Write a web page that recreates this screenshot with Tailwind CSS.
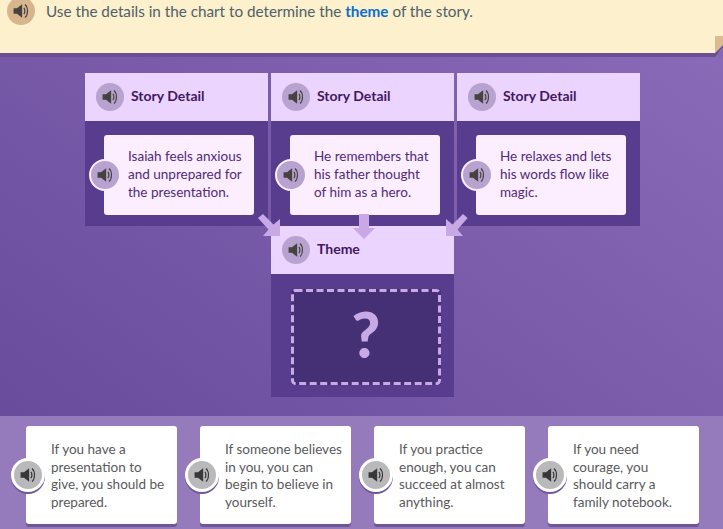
<!DOCTYPE html>
<html>
<head>
    <title>Theme chart</title>
    <meta charset="UTF-8">
    <meta name="viewport" content="width=device-width, initial-scale=1.0">
    <script src="https://cdn.jsdelivr.net/npm/@tailwindcss/browser@4"></script>
</head>
<body class="h-[529px] w-[723px] overflow-hidden font-['Lato','Liberation_Sans',sans-serif]">
<svg class="hidden">
    <symbol id="speaker" viewBox="0 1 14 14">
        <path d="M0.5 5.5H3.5L8 2V14L3.5 10.5H0.5Z" fill="currentColor"/>
        <path d="M9.5 5.2C10.7 6.6 10.7 9.4 9.5 10.8" fill="none" stroke="currentColor" stroke-width="1.1"/>
        <path d="M10.5 2.3C13.4 4.8 13.4 11.2 10.5 13.7" fill="none" stroke="currentColor" stroke-width="1"/>
    </symbol>
</svg>
<div class="relative flex h-full flex-col bg-gradient-to-tr from-[#664899] to-[#8a6cb9]">
    <!-- prompt banner -->
    <div class="relative h-[57px] shrink-0 border-b-[4px] border-[#6a4f94] bg-[#fdf0cd] pl-[7px]">
        <div class="flex items-start gap-[11px]">
            <div class="mt-[-3px] flex h-[28px] w-[28px] items-center justify-center rounded-full bg-[#d8b58c] text-[#45423f]">
                <svg class="h-[16px] w-[16px]"><use href="#speaker"/></svg>
            </div>
            <p class="text-[15.25px] leading-[22px] text-[#4f6069]">Use the details in the chart to determine the <b class="font-bold text-[#0a6fd0]">theme</b> of the story.</p>
        </div>
        <!-- folded corner -->
        <svg class="absolute right-0 bottom-[-4px] h-[21px] w-[8px]" viewBox="0 0 8 21">
            <path d="M0 0H8V9L0 17Z" fill="#dcbb90"/>
            <path d="M0 17L8 9V12L0 21Z" fill="#6a4f94"/>
            <path d="M8 12V21H0Z" fill="#8568b4"/>
        </svg>
    </div>

    <!-- chart -->
    <div class="h-[359px] shrink-0 pt-[16px] pl-[85px]">
        <div class="relative w-[555px]">
            <div class="grid grid-cols-[183px_183px_183px] gap-x-[3px]">
                <div>
                    <div class="flex h-[48px] items-center gap-[7px] bg-[#ebd4fe] pl-[11px]">
                        <div class="flex h-[28px] w-[28px] items-center justify-center rounded-full bg-[#b8a2cf] text-[#45423f]"><svg class="h-[16px] w-[16px]"><use href="#speaker"/></svg></div>
                        <span class="mb-[3px] text-[14px] font-bold text-[#43185f]">Story Detail</span>
                    </div>
                    <div class="h-[105px] bg-[#583d8e] pt-[14px] pl-[19px]">
                        <div class="relative h-[80px] w-[150px] rounded-[3px] bg-[#fdeeff] pt-[12px] pl-[24px] text-[13.5px] leading-[18px] text-[#4f2b78]">
                            <div class="absolute top-[24px] left-[-15px] flex h-[32px] w-[32px] items-center justify-center rounded-full border-[2px] border-[#fdeeff] bg-[#b8a2cf] text-[#45423f]"><svg class="h-[16px] w-[16px]"><use href="#speaker"/></svg></div>
                            Isaiah feels anxious<br>and unprepared for<br>the presentation.
                        </div>
                    </div>
                </div>
                <div>
                    <div class="flex h-[48px] items-center gap-[7px] bg-[#ebd4fe] pl-[11px]">
                        <div class="flex h-[28px] w-[28px] items-center justify-center rounded-full bg-[#b8a2cf] text-[#45423f]"><svg class="h-[16px] w-[16px]"><use href="#speaker"/></svg></div>
                        <span class="mb-[3px] text-[14px] font-bold text-[#43185f]">Story Detail</span>
                    </div>
                    <div class="h-[105px] bg-[#583d8e] pt-[14px] pl-[19px]">
                        <div class="relative h-[80px] w-[150px] rounded-[3px] bg-[#fdeeff] pt-[12px] pl-[24px] text-[13.5px] leading-[18px] text-[#4f2b78]">
                            <div class="absolute top-[24px] left-[-15px] flex h-[32px] w-[32px] items-center justify-center rounded-full border-[2px] border-[#fdeeff] bg-[#b8a2cf] text-[#45423f]"><svg class="h-[16px] w-[16px]"><use href="#speaker"/></svg></div>
                            He remembers that<br>his father thought<br>of him as a hero.
                        </div>
                    </div>
                </div>
                <div>
                    <div class="flex h-[48px] items-center gap-[7px] bg-[#ebd4fe] pl-[11px]">
                        <div class="flex h-[28px] w-[28px] items-center justify-center rounded-full bg-[#b8a2cf] text-[#45423f]"><svg class="h-[16px] w-[16px]"><use href="#speaker"/></svg></div>
                        <span class="mb-[3px] text-[14px] font-bold text-[#43185f]">Story Detail</span>
                    </div>
                    <div class="h-[105px] bg-[#583d8e] pt-[14px] pl-[19px]">
                        <div class="relative h-[80px] w-[150px] rounded-[3px] bg-[#fdeeff] pt-[12px] pl-[24px] text-[13.5px] leading-[18px] text-[#4f2b78]">
                            <div class="absolute top-[24px] left-[-15px] flex h-[32px] w-[32px] items-center justify-center rounded-full border-[2px] border-[#fdeeff] bg-[#b8a2cf] text-[#45423f]"><svg class="h-[16px] w-[16px]"><use href="#speaker"/></svg></div>
                            He relaxes and lets<br>his words flow like<br>magic.
                        </div>
                    </div>
                </div>
            </div>

            <div class="mx-auto w-[183px]">
                <div class="flex h-[48px] items-center gap-[7px] bg-[#ebd4fe] pl-[11px]">
                    <div class="flex h-[28px] w-[28px] items-center justify-center rounded-full bg-[#b8a2cf] text-[#45423f]"><svg class="h-[16px] w-[16px]"><use href="#speaker"/></svg></div>
                    <span class="mb-[3px] text-[14px] font-bold text-[#43185f]">Theme</span>
                </div>
                <div class="h-[123px] bg-[#583d8e] pt-[15px] pl-[20px]">
                    <div class="relative flex h-[96px] w-[150px] items-center justify-center rounded-[3px] bg-[#453075] pb-[6px] text-[62px] font-black text-[#c8a9e6]">
                        <svg class="absolute inset-0 h-[96px] w-[150px]" viewBox="0 0 150 96" fill="none"><rect x="1.5" y="1.5" width="147" height="93" rx="3" stroke="#c8a9e6" stroke-width="3" stroke-dasharray="7 3.5"/></svg>
                        ?
                    </div>
                </div>
            </div>

            <!-- arrows into the theme box -->
            <svg class="absolute top-[141px] left-[173px] h-[26px] w-[210px]" viewBox="0 0 210 26" fill="#c8a9e6">
                <path d="M0 4L5 0L15.5 10.5L22 5V22H5L10.5 15.5Z"/>
                <path d="M101 0H111V14H117L106 25L95 14H101Z"/>
                <path d="M209.7 4L205 0L194.5 10.5L188 5V22H205L199.5 15.5Z"/>
            </svg>
        </div>
    </div>

    <!-- answer tray -->
    <div class="grid h-[113px] grow grid-cols-[151px_151px_151px_151px] gap-x-[23px] bg-[#957bbb] pt-[10px] pl-[26px]">
        <div class="relative h-[98px] rounded-[3px] bg-white pt-[15px] pl-[25px] text-[13.5px] leading-[17.5px] text-[#59595b] shadow-[0_3px_0_#6f5796]">
            <div class="absolute top-[32px] left-[-15px] flex h-[34px] w-[34px] items-center justify-center rounded-full border-[3px] border-white bg-[#b9b9bb] text-[#37373a] shadow-[0_2px_0_#6f5796]"><svg class="h-[16px] w-[16px]"><use href="#speaker"/></svg></div>
            If you have a<br>presentation to<br>give, you should be<br>prepared.
        </div>
        <div class="relative h-[98px] rounded-[3px] bg-white pt-[15px] pl-[25px] text-[13.5px] leading-[17.5px] text-[#59595b] shadow-[0_3px_0_#6f5796]">
            <div class="absolute top-[32px] left-[-15px] flex h-[34px] w-[34px] items-center justify-center rounded-full border-[3px] border-white bg-[#b9b9bb] text-[#37373a] shadow-[0_2px_0_#6f5796]"><svg class="h-[16px] w-[16px]"><use href="#speaker"/></svg></div>
            If someone believes<br>in you, you can<br>begin to believe in<br>yourself.
        </div>
        <div class="relative h-[98px] rounded-[3px] bg-white pt-[15px] pl-[25px] text-[13.5px] leading-[17.5px] text-[#59595b] shadow-[0_3px_0_#6f5796]">
            <div class="absolute top-[32px] left-[-15px] flex h-[34px] w-[34px] items-center justify-center rounded-full border-[3px] border-white bg-[#b9b9bb] text-[#37373a] shadow-[0_2px_0_#6f5796]"><svg class="h-[16px] w-[16px]"><use href="#speaker"/></svg></div>
            If you practice<br>enough, you can<br>succeed at almost<br>anything.
        </div>
        <div class="relative h-[98px] rounded-[3px] bg-white pt-[15px] pl-[25px] text-[13.5px] leading-[17.5px] text-[#59595b] shadow-[0_3px_0_#6f5796]">
            <div class="absolute top-[32px] left-[-15px] flex h-[34px] w-[34px] items-center justify-center rounded-full border-[3px] border-white bg-[#b9b9bb] text-[#37373a] shadow-[0_2px_0_#6f5796]"><svg class="h-[16px] w-[16px]"><use href="#speaker"/></svg></div>
            If you need<br>courage, you<br>should carry a<br>family notebook.
        </div>
    </div>
</div>
</body>
</html>
